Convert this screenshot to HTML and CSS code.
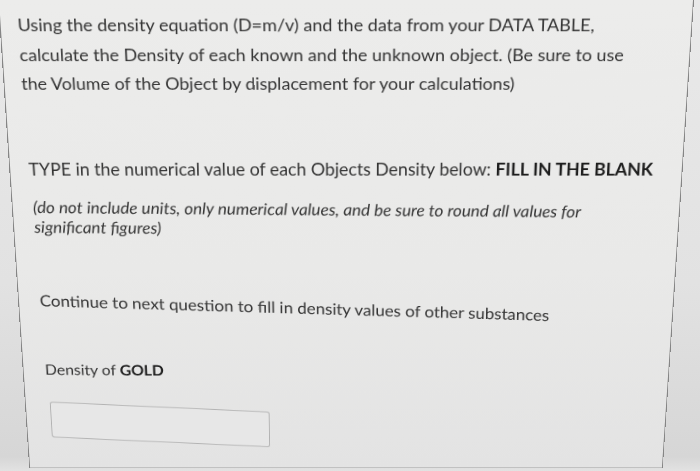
FILE: index.html
```html
<!DOCTYPE html>
<html>
<head>
<meta charset="utf-8">
<link rel="stylesheet" href="styles.css">
</head>
<body>
<div class="panel">
  <p class="intro">Using the density equation (D=m/v) and the data from your DATA TABLE, calculate the Density of each known and the unknown object. (Be sure to use the Volume of the Object by displacement for your calculations)</p>
  <p class="type">TYPE in the numerical value of each Objects Density below: <strong>FILL IN THE BLANK</strong></p>
  <p class="note"><em>(do not include units, only numerical values, and be sure to round all values for significant figures)</em></p>
  <p class="cont">Continue to next question to fill in density values of other substances</p>
  <p class="label">Density of <strong>GOLD</strong></p>
  <div class="answer"></div>
</div>
</body>
</html>
```

FILE: styles.css
```css
html, body {
  margin: 0;
  padding: 0;
  width: 700px;
  height: 471px;
  overflow: hidden;
}
body {
  background: linear-gradient(180deg, #e9e9e9 0%, #e2e2e2 60%, #d6d6d6 97%, #e2e2e2 100%);
  font-family: Lato, "Noto Sans", sans-serif;
  color: #343434;
}
.panel {
  box-sizing: border-box;
  width: 696px;
  height: 524px;
  margin-left: -2px;
  padding: 10px 17px 0 17px;
  border: 1.5px solid #858585;
  border-top: none;
  transform-origin: 50% 0;
  transform: perspective(1000px) rotateX(-10.85deg);
  background: linear-gradient(180deg, #ececeb 0%, #e9e9e8 55%, #e3e3e3 100%);
}
p { margin: 0; }
strong { font-weight: 700; color: #1e1e1e; }
.intro {
  max-width: 624px;
  font-size: 18.1px;
  line-height: 30.6px;
}
.type {
  margin-top: 62.8px;
  padding-left: 2px;
  font-size: 18.3px;
  line-height: 26px;
}
.note {
  max-width: 606px;
  margin-top: 17.5px;
  padding-left: 4px;
  font-size: 17.8px;
  line-height: 22.2px;
  transform-origin: 0 50%;
  transform: skewY(0.5deg);
}
.cont {
  margin-top: 59.3px;
  padding-left: 5px;
  font-size: 17.9px;
  line-height: 24px;
  transform-origin: 0 50%;
  transform: skewY(1.8deg);
}
.label {
  margin-top: 58.4px;
  padding-left: 6px;
  font-size: 16.9px;
  line-height: 22px;
  transform-origin: 0 50%;
  transform: skewY(0.5deg);
}
.answer {
  margin-top: 27px;
  margin-left: 9px;
  width: 238px;
  height: 43px;
  box-sizing: border-box;
  border: 1.5px solid #b2b2b2;
  border-radius: 3px;
  background: #e7e7e7;
  transform-origin: 0 0;
  transform: skewY(2.9deg);
}
```
